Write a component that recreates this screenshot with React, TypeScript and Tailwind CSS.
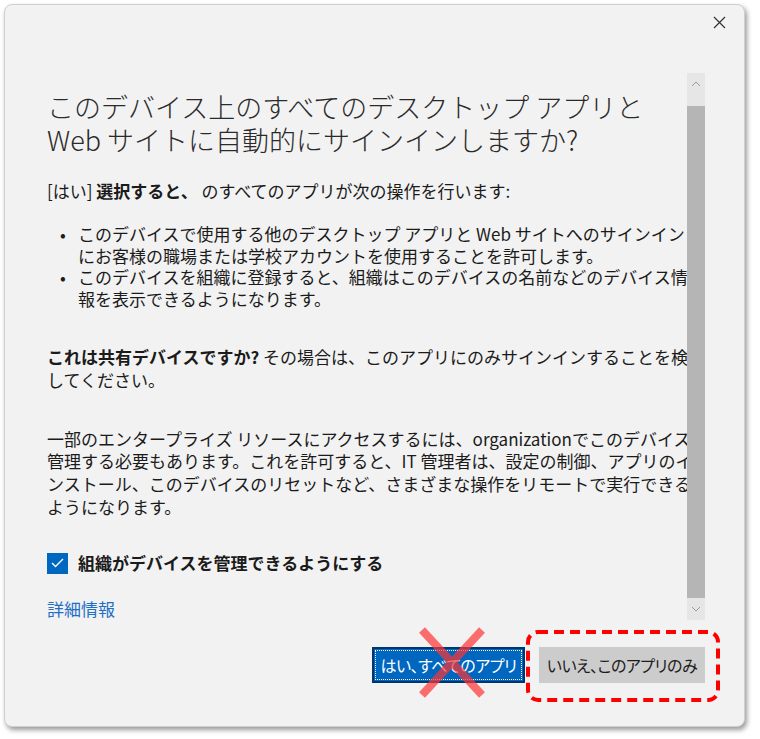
import React from "react";

const Line = ({ children }: { children: React.ReactNode }) => (
  <span className="block whitespace-nowrap">{children}</span>
);

const Chevron = ({ up }: { up?: boolean }) => (
  <svg width="10" height="6" viewBox="0 0 10 6" className={up ? "" : "rotate-180"}>
    <path d="M1 5 L5 1 L9 5" fill="none" stroke="#9a9a9a" strokeWidth="1" />
  </svg>
);

const App = () => {
  return (
    <div className="relative w-[760px] h-[739px] bg-white pt-[4px] pl-[4px] font-['Noto_Sans_CJK_JP','Noto_Sans',sans-serif] text-[#1b1b1b]">
      {/* --- dialog ---- */}
      <div className="w-[741px] h-[723px] bg-[#f2f2f2] rounded-[8px] border border-[#cfcfcf] shadow-[2px_3px_5px_rgba(0,0,0,0.4)] flex flex-col overflow-hidden">
        <div className="h-[68px] flex justify-end items-start pt-[11px] pr-[18px]">
          <svg width="13" height="13" viewBox="0 0 13 13">
            <path d="M1 1 L12 12 M12 1 L1 12" stroke="#333" strokeWidth="1.2" />
          </svg>
        </div>

        <div className="h-[547px] flex">
          <div className="w-[682px] overflow-hidden pl-[42px] pt-[17px]">
            <h1 className="text-[27px] leading-[33px] font-light text-[#2a2a2a]">
              <Line>このデバイス上のすべてのデスクトップ アプリと</Line>
              <Line>Web サイトに自動的にサインインしますか?</Line>
            </h1>

            <p className="mt-[24px] text-[17px] leading-[22px] whitespace-nowrap">
              [はい] <span className="font-bold">選択すると、</span> のすべてのアプリが次の操作を行います:
            </p>

            <ul className="mt-[21px] text-[17px] leading-[21.7px]">
              <li className="flex">
                <span className="w-[31px] pl-[13px] shrink-0">•</span>
                <div>
                  <Line>このデバイスで使用する他のデスクトップ アプリと Web サイトへのサインイン</Line>
                  <Line>にお客様の職場または学校アカウントを使用することを許可します。</Line>
                </div>
              </li>
              <li className="flex">
                <span className="w-[31px] pl-[13px] shrink-0">•</span>
                <div>
                  <Line>このデバイスを組織に登録すると、組織はこのデバイスの名前などのデバイス情</Line>
                  <Line>報を表示できるようになります。</Line>
                </div>
              </li>
            </ul>

            <p className="mt-[35px] text-[17px] leading-[23px]">
              <Line>
                <span className="font-bold">これは共有デバイスですか?</span> その場合は、このアプリにのみサインインすることを検討
              </Line>
              <Line>してください。</Line>
            </p>

            <p className="mt-[37px] text-[17px] leading-[22.6px]">
              <Line>一部のエンタープライズ リソースにアクセスするには、organizationでこのデバイスを</Line>
              <Line>管理する必要もあります。これを許可すると、IT 管理者は、設定の制御、アプリのイ</Line>
              <Line>ンストール、このデバイスのリセットなど、さまざまな操作をリモートで実行できる</Line>
              <Line>ようになります。</Line>
            </p>

            <div className="mt-[33px] flex items-center gap-[10px]">
              <div className="w-[21px] h-[21px] bg-[#0067c0] flex items-center justify-center">
                <svg width="13" height="10" viewBox="0 0 13 10">
                  <path d="M1 5 L4.5 8.5 L12 1" fill="none" stroke="white" strokeWidth="1.4" />
                </svg>
              </div>
              <span className="text-[17px] font-bold leading-[24px]">組織がデバイスを管理できるようにする</span>
            </div>

            <p className="mt-[22px] text-[17px] leading-[24px] text-[#1f6fc5]">詳細情報</p>
          </div>

          {/* --- scrollbar ---- */}
          <div className="w-[18px] flex flex-col">
            <div className="h-[33px] bg-[#e6e6e6] flex justify-center pt-[8px]">
              <Chevron up />
            </div>
            <div className="flex-1 bg-[#b5b5b5]" />
            <div className="h-[22px] bg-[#e6e6e6] flex justify-center pt-[8px]">
              <Chevron />
            </div>
          </div>
        </div>

        {/* --- footer buttons ---- */}
        <div className="flex justify-end gap-[14px] pt-[27px] pr-[39px]">
          <button className="w-[153px] h-[36px] bg-[#0067c0] border-2 border-[#00366b] p-[1px] text-white">
            <span className="flex h-full w-full items-center justify-center border border-dotted border-white text-[16px] tracking-[-0.5px] [font-feature-settings:'palt']">
              はい、すべてのアプリ
            </span>
          </button>
          <button className="w-[166px] h-[36px] bg-[#cccccc] text-[16px] tracking-[-0.5px] text-[#1b1b1b] [font-feature-settings:'palt']">
            いいえ、このアプリのみ
          </button>
        </div>
      </div>

      {/* --- annotations ---- */}
      <svg className="absolute left-[418px] top-[626px]" width="70" height="74" viewBox="0 0 70 74">
        <path d="M4 4 L64 69 M64 4 L4 69" stroke="#ff3333" strokeOpacity="0.7" strokeWidth="8" />
      </svg>
      <svg className="absolute left-[526px] top-[630px]" width="194" height="72" viewBox="0 0 194 72">
        <rect x="2" y="2" width="190" height="68" rx="10" fill="none" stroke="#ff0000" strokeWidth="4" strokeDasharray="10 6" />
      </svg>
    </div>
  );
};

export default App;
